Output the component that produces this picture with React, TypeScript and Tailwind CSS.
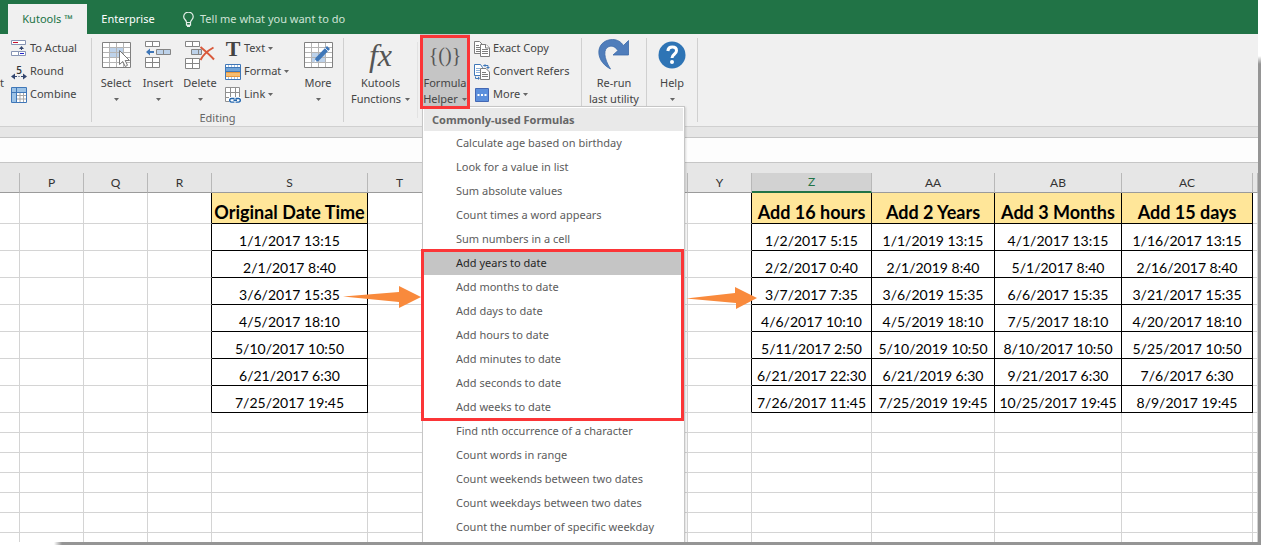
import { useState } from 'react';
import type { ReactNode } from 'react';

const formulas = [
  'Calculate age based on birthday',
  'Look for a value in list',
  'Sum absolute values',
  'Count times a word appears',
  'Sum numbers in a cell',
  'Add years to date',
  'Add months to date',
  'Add days to date',
  'Add hours to date',
  'Add minutes to date',
  'Add seconds to date',
  'Add weeks to date',
  'Find nth occurrence of a character',
  'Count words in range',
  'Count weekends between two dates',
  'Count weekdays between two dates',
  'Count the number of specific weekday',
];

// Columns between T and Y lie behind the open menu and stay unlabelled.
const columns = [
  { name: '', width: 'w-[20px]' },
  { name: 'P', width: 'w-[64px]' },
  { name: 'Q', width: 'w-[64px]' },
  { name: 'R', width: 'w-[64px]' },
  { name: 'S', width: 'w-[156px]' },
  { name: 'T', width: 'w-[64px]' },
  { name: '', width: 'w-[64px]' },
  { name: '', width: 'w-[64px]' },
  { name: '', width: 'w-[64px]' },
  { name: '', width: 'w-[64px]' },
  { name: 'Y', width: 'w-[64px]' },
  { name: 'Z', width: 'w-[120px]' },
  { name: 'AA', width: 'w-[123px]' },
  { name: 'AB', width: 'w-[127px]' },
  { name: 'AC', width: 'w-[131px]' },
  { name: '', width: '' },
];

const titles: Record<string, string> = {
  S: 'Original Date Time',
  Z: 'Add 16 hours',
  AA: 'Add 2 Years',
  AB: 'Add 3 Months',
  AC: 'Add 15 days',
};

const rows: Record<string, string>[] = [
  { S: '1/1/2017 13:15', Z: '1/2/2017 5:15', AA: '1/1/2019 13:15', AB: '4/1/2017 13:15', AC: '1/16/2017 13:15' },
  { S: '2/1/2017 8:40', Z: '2/2/2017 0:40', AA: '2/1/2019 8:40', AB: '5/1/2017 8:40', AC: '2/16/2017 8:40' },
  { S: '3/6/2017 15:35', Z: '3/7/2017 7:35', AA: '3/6/2019 15:35', AB: '6/6/2017 15:35', AC: '3/21/2017 15:35' },
  { S: '4/5/2017 18:10', Z: '4/6/2017 10:10', AA: '4/5/2019 18:10', AB: '7/5/2017 18:10', AC: '4/20/2017 18:10' },
  { S: '5/10/2017 10:50', Z: '5/11/2017 2:50', AA: '5/10/2019 10:50', AB: '8/10/2017 10:50', AC: '5/25/2017 10:50' },
  { S: '6/21/2017 6:30', Z: '6/21/2017 22:30', AA: '6/21/2019 6:30', AB: '9/21/2017 6:30', AC: '7/6/2017 6:30' },
  { S: '7/25/2017 19:45', Z: '7/26/2017 11:45', AA: '7/25/2019 19:45', AB: '10/25/2017 19:45', AC: '8/9/2017 19:45' },
];

const emptyRows = [0, 1, 2, 3, 4, 5, 6];

function Caret() {
  return (
    <svg width="5" height="3" viewBox="0 0 5 3" className="shrink-0" aria-hidden="true">
      <path d="M0 0h5L2.5 3z" fill="#666" />
    </svg>
  );
}

function Separator() {
  return <div className="my-1 w-px shrink-0 bg-[#d0d0d0]" />;
}

interface BigButtonProps {
  icon: ReactNode;
  label: string;
  second?: string;
  caret?: boolean;
  className: string;
}

function BigButton({ icon, label, second, caret = true, className }: BigButtonProps) {
  return (
    <button className={`flex h-[75px] shrink-0 flex-col items-center whitespace-nowrap leading-4 ${className}`}>
      <span className="flex h-[41px] items-center justify-center">{icon}</span>
      <span>{label}</span>
      <span className="flex h-4 items-center gap-1">
        {second}
        {caret && <Caret />}
      </span>
    </button>
  );
}

function SmallButton({ icon, label, caret }: { icon: ReactNode; label: string; caret?: boolean }) {
  return (
    <button className="flex h-[23px] items-center gap-[3px] whitespace-nowrap">
      <span className="flex w-4 shrink-0 justify-center">{icon}</span>
      <span>{label}</span>
      {caret && <Caret />}
    </button>
  );
}

const ToActualIcon = () => (
  <svg width="16" height="17" viewBox="0 0 16 17" fill="#fff">
    <path d="M.5.5h14v4H.5zM.5 11.5h7v4h-7zM7.5 11.5h7v4h-7z" stroke="#8794b4" />
    <path d="M2 2.5h5" stroke="#c8102e" />
    <path d="M9 13.5h4" stroke="#2222cc" />
    <path d="M10.500 6l2.500 3h-5z" fill="#33466f" />
    <path d="M10.500 8v2" stroke="#33466f" />
  </svg>
);

const RoundIcon = () => (
  <svg width="16" height="18" viewBox="0 0 16 18">
    <text x="8" y="11" textAnchor="middle" fontSize="10" fontWeight="600" fill="#333" fontFamily="Open Sans, sans-serif">5</text>
    <path d="M0 13.500L4 10.500v6zM16 13.500l-4-3v6z" fill="#33466f" />
    <path d="M3 13.500h3M10 13.500h3M7.500 13.500h1" stroke="#33466f" />
  </svg>
);

const CombineIcon = () => (
  <svg width="16" height="16" viewBox="0 0 16 16">
    <path d="M.5.5h15v15H.5z" fill="#fff" />
    <path d="M1 1h14v4H1zM1 5h4v10H1z" fill="#9dc3e6" />
    <path d="M5.500 5v10M9 5v10M12.500 5v10M5 8.500h10M5 12h10" stroke="#a8a8a8" />
    <path d="M.5.5h15v15H.5zM.5 5.500h15M5.500.5v15" fill="none" stroke="#3f77b8" />
  </svg>
);

const GridBase = () => (
  <>
    <path d="M.5.5h28v25H.5z" fill="#fff" />
    <path d="M7.500 6h14v10h-14z" fill="#bdd2ea" />
    <path d="M7.500 1v24M14.500 1v24M21.500 1v24M1 5.500h27M1 10.500h27M1 15.500h27M1 20.500h27" stroke="#b4b4b4" />
    <path d="M.5.5h28v25H.5z" fill="none" stroke="#808080" />
  </>
);

const SelectIcon = () => (
  <svg width="29" height="26" viewBox="0 0 29 26">
    <GridBase />
    <path d="M17.500 8.500v14l3.300-3 2.400 5 2.300-1.200-2.300-4.800h4.300z" fill="#fff" stroke="#777" />
  </svg>
);

const MoreIcon = () => (
  <svg width="29" height="26" viewBox="0 0 29 26">
    <path d="M.5.5h28v25H.5z" fill="#fff" />
    <path d="M7.500 11h14v9h-14z" fill="#bdd2ea" />
    <path d="M7.500 1v24M14.500 1v24M21.500 1v24M1 5.500h27M1 10.500h27M1 15.500h27M1 20.500h27" stroke="#b4b4b4" />
    <path d="M.5.5h28v25H.5z" fill="none" stroke="#808080" />
    <path d="M10 20.500l1.500-4.500L23 4l3 3L14.500 19z" fill="#3f77b8" />
    <path d="M21 6l3 3" stroke="#fff" strokeWidth=".8" />
    <path d="M10 20.500l1-3 2 2z" fill="#fff" />
  </svg>
);

const InsertIcon = () => (
  <svg width="27" height="28" viewBox="0 0 27 28" fill="#fff" stroke="#858585">
    <path d="M.5.5h14v5H.5zM7.500.5v5M.5 16.500h14v10H.5zM7.500 16.500v10M.5 21.500h14" />
    <path d="M11.500 8.500h14v5h-14zM18.500 8.500v5" fill="#bdd2ea" />
    <path d="M1 11l4-3.500v2.500h4v2H5v2.500z" fill="#3f77b8" stroke="none" />
  </svg>
);

const DeleteIcon = () => (
  <svg width="30" height="28" viewBox="0 0 30 28" fill="#fff" stroke="#858585">
    <path d="M.5.500h14v5H.5zM7.500.5v5M.5 17.500h14v10H.5zM7.500 17.500v10M.5 22.500h14" />
    <path d="M6.500 8.500h10v5h-10zM13.500 8.500v5" fill="#bdd2ea" />
    <path d="M15.500 6c3 2.500 9 7.500 13.500 12.500M28.500 6.500C24 9 18 14 15.500 19" fill="none" stroke="#d9593b" strokeWidth="2" />
  </svg>
);

const FormatIcon = () => (
  <svg width="16" height="16" viewBox="0 0 16 16">
    <path d="M.5.5h15v15H.5z" fill="#fff" />
    <path d="M3.500 1v14M6.500 1v14M9.500 1v14M12.500 1v14" stroke="#a8c4e2" />
    <path d="M1 4h14v3H1z" fill="#6fa3d8" />
    <path d="M1 9h14v3H1z" fill="#f6bd72" />
    <path d="M0 3.500h16M0 7.500h16" stroke="#3f77b8" />
    <path d="M1 8.500h14M1 12.500h14" stroke="#e8973c" />
    <path d="M.5.5h15v15H.5z" fill="none" stroke="#3f77b8" />
  </svg>
);

const LinkIcon = () => (
  <svg width="16" height="16" viewBox="0 0 16 16" fill="none">
    <path d="M.5.5h14v14H.5z" fill="#fff" />
    <path d="M5.500.5v14M10.500.5v14M.5 5.500h14M.5 10.500h14M.5.5h14v14H.5z" stroke="#909090" />
    <path d="M4 10h12v6H4z" fill="#fff" />
    <path d="M9.500 11.500h-3a1.800 1.800 0 000 3.600h3M10.500 15.100h3a1.800 1.800 0 000-3.600h-3M8.500 13.300h3.500" stroke="#2366ad" strokeWidth="1.400" />
  </svg>
);

const CopyIcon = () => (
  <svg width="16" height="16" viewBox="0 0 16 16" fill="#fff" stroke="#7d7d7d">
    <path d="M.5.5h5l3 3v9h-8z" />
    <path d="M2 4.500h3M2 6.500h5M2 8.500h5M2 10.500h4" />
    <path d="M6.500 3.500h5.500l3.500 3.500v8.500h-9z" />
    <path d="M11.500 3.500v3.500h4M8 8.500h6M8 10.500h6M8 12.500h6" />
  </svg>
);

const ConvertIcon = () => (
  <svg width="16" height="16" viewBox="0 0 16 16" fill="#fff">
    <path d="M.5 11.500v-11h6l2 3v8z" stroke="#3f77b8" />
    <path d="M2 4.500h4M2 6.500h4M2 8.500h4" stroke="#8cb0d8" />
    <path d="M6.500 4.500h5.500l3.500 3.500v7.500h-9z" stroke="#7d7d7d" />
    <path d="M8 8.500h4M8 10.500h6M8 12.500h6" stroke="#7d7d7d" />
    <path d="M9.500 1.500h4.500v2M1.500 12.500v2H5" fill="none" stroke="#3f77b8" />
    <path d="M11.500 0v3L9 1.500zM12 3h4l-2 2zM4 12.500v3.500l2-1.700z" fill="#3f77b8" />
  </svg>
);

const DotsIcon = () => (
  <svg width="14" height="14" viewBox="0 0 14 14">
    <path d="M.5.5h13v13H.5z" fill="#5b8fdc" stroke="#4468b4" />
    <path d="M2.500 6h2v2h-2zM6 6h2v2H6zM9.500 6h2v2h-2z" fill="#fff" />
  </svg>
);

const RerunIcon = () => (
  <svg width="32" height="31" viewBox="0 0 32 31">
    <path
      d="M12.500 30C3 25 0 17 1 11 2 4.500 8 .5 14.500.5c5 0 8.500 2.500 11 6l5-5V16H15l5-4.500C17 7.500 14 6.500 11 7.500 5 9.500 5.500 19 12.500 30z"
      fill="#4f7dbb"
      stroke="#3c69a8"
      strokeWidth=".8"
    />
  </svg>
);

const HelpIcon = () => (
  <svg width="28" height="28" viewBox="0 0 28 28">
    <circle cx="14" cy="14" r="13.500" fill="#2e74b5" />
    <path d="M9.800 10c.3-2.500 2-3.900 4.400-3.900 2.600 0 4.300 1.500 4.300 3.600 0 3.600-4.500 3.500-4.500 7.300" fill="none" stroke="#fff" strokeWidth="3" />
    <circle cx="14" cy="21" r="2" fill="#fff" />
  </svg>
);

const BulbIcon = () => (
  <svg width="11" height="15" viewBox="0 0 11 15" fill="none" stroke="#e6f0ea" strokeWidth="1.200">
    <path d="M3.500 10.500c0-2.500-2.800-3-2.800-5.700a4.700 4.700 0 019.500 0c0 2.700-2.700 3.200-2.700 5.700zM3.500 10.500v2.700h4v-2.700M4 14.300h3" />
  </svg>
);

function FormulaMenu() {
  const [active, setActive] = useState(5);

  return (
    <div className="absolute top-[72px] left-[2px] w-[263px] border border-[#c6c6c6] bg-white p-px pb-3 text-[#5c5c5c] shadow-[1px_1px_2px_rgba(0,0,0,0.15)]">
      <h2 className="h-[23px] bg-[#e9e9e9] pl-2 font-bold leading-[23px] text-[#666]">Commonly-used Formulas</h2>
      <ul role="menu">
        {formulas.map((name, index) => (
          <li key={name} role="none">
            <button
              role="menuitem"
              onMouseEnter={() => setActive(index)}
              className={`block h-6 w-full pl-8 text-left whitespace-nowrap leading-6 ${index === active ? 'bg-[#c5c5c5] text-[#262626]' : ''}`}
            >
              {name}
            </button>
          </li>
        ))}
      </ul>
      {/* callout around the date helpers */}
      <div className="pointer-events-none absolute -left-[2px] top-[142px] h-[172px] w-[263px] border-3 border-[#fb3537]" />
    </div>
  );
}

function Ribbon() {
  return (
    <div className="relative z-10 flex h-[93px] shrink-0 border-b border-[#d0d0d0] bg-[#f0f0f0] text-[#444]">
      <div className="flex w-[91px] shrink-0">
        <span className="w-[11px] shrink-0 pt-[41px] leading-4">t</span>
        <div className="flex flex-col items-start pt-[3px]">
          <SmallButton icon={<ToActualIcon />} label="To Actual" />
          <SmallButton icon={<RoundIcon />} label="Round" />
          <SmallButton icon={<CombineIcon />} label="Combine" />
        </div>
      </div>
      <Separator />
      <div className="flex w-[251px] shrink-0 flex-col">
        <div className="flex pl-[3px]">
          <BigButton className="w-[42px]" icon={<SelectIcon />} label="Select" />
          <BigButton className="w-[42px]" icon={<InsertIcon />} label="Insert" />
          <BigButton className="w-[42px]" icon={<DeleteIcon />} label="Delete" />
          <div className="flex w-[76px] flex-col items-start pt-[3px] pl-1">
            <SmallButton icon={<span className="font-['Liberation_Serif',serif] text-[22px] leading-5 font-bold">T</span>} label="Text" caret />
            <SmallButton icon={<FormatIcon />} label="Format" caret />
            <SmallButton icon={<LinkIcon />} label="Link" caret />
          </div>
          <BigButton className="w-[42px]" icon={<MoreIcon />} label="More" />
        </div>
        <span className="text-center leading-[18px] text-[#666]">Editing</span>
      </div>
      <Separator />
      <BigButton
        className="w-[73px]"
        icon={<span className="font-['Liberation_Serif',serif] text-[32px] leading-8 text-[#555] italic">fx</span>}
        label="Kutools"
        second="Functions"
      />
      <div className="my-2 mr-[2px] w-px shrink-0 bg-[#e2e2e2]" />
      <div className="relative w-[50px] shrink-0">
        <BigButton
          className="w-[50px] bg-[#c5c5c5]"
          icon={<span className="font-['Liberation_Serif',serif] text-[20px] leading-6 text-[#555]">{'{()}'}</span>}
          label="Formula"
          second="Helper"
        />
        <FormulaMenu />
        <div className="pointer-events-none absolute top-px left-0 h-[74px] w-[50px] border-3 border-[#fb3537]" />
      </div>
      <div className="flex w-[111px] shrink-0 flex-col items-start pt-[3px] pl-1">
        <SmallButton icon={<CopyIcon />} label="Exact Copy" />
        <SmallButton icon={<ConvertIcon />} label="Convert Refers" />
        <SmallButton icon={<DotsIcon />} label="More" caret />
      </div>
      <Separator />
      <BigButton className="w-[64px]" icon={<RerunIcon />} label="Re-run" second="last utility" caret={false} />
      <Separator />
      <BigButton className="w-[50px]" icon={<HelpIcon />} label="Help" />
      <Separator />
    </div>
  );
}

function Sheet() {
  // The boxed columns carry black borders; R and Y close them on the left.
  const rightBorder = (name: string) => (titles[name] || name === 'R' || name === 'Y' ? 'border-r-black' : 'border-r-[#d4d4d4]');
  const bottomBorder = (name: string) => (titles[name] ? 'border-b-black' : 'border-b-[#d4d4d4]');

  return (
    <div className="relative min-h-0 flex-1 overflow-hidden bg-white">
      <div className="h-[10px] bg-[#e6e6e6]" />
      <table className="w-full table-fixed border-separate border-spacing-0 font-[Lato,sans-serif] text-[14px] text-black">
        <colgroup>
          {columns.map((column, index) => (
            <col key={index} className={column.width} />
          ))}
        </colgroup>
        <thead>
          <tr className="h-5 bg-[#e6e6e6] text-[12px] text-[#333]">
            {columns.map((column, index) => (
              <th
                key={index}
                scope="col"
                className={`border-r border-r-[#b8b8b8] p-0 leading-[18px] font-normal ${
                  column.name === 'Z' ? 'border-b-2 border-b-[#217346] bg-[#d2d2d2] text-[#217346]' : 'border-b border-b-[#9b9b9b]'
                }`}
              >
                {column.name}
              </th>
            ))}
          </tr>
        </thead>
        <tbody>
          <tr className="h-[31px] text-[18px]">
            {columns.map(({ name }, index) => (
              <td
                key={index}
                className={`border-r border-b p-0 text-center align-bottom leading-[22px] font-bold whitespace-nowrap ${rightBorder(name)} ${bottomBorder(name)} ${titles[name] ? 'bg-[#ffe699]' : ''}`}
              >
                {titles[name]}
              </td>
            ))}
          </tr>
          {rows.map((row) => (
            <tr key={row.S} className="h-[27px]">
              {columns.map(({ name }, index) => (
                <td
                  key={index}
                  className={`border-r border-b p-0 text-center align-bottom leading-[18px] whitespace-nowrap ${rightBorder(name)} ${bottomBorder(name)}`}
                >
                  {row[name]}
                </td>
              ))}
            </tr>
          ))}
          {emptyRows.map((row) => (
            <tr key={row} className="h-5">
              {columns.map((_, index) => (
                <td key={index} className="border-r border-b border-[#d4d4d4] p-0" />
              ))}
            </tr>
          ))}
        </tbody>
      </table>
      <svg className="absolute top-[123px] left-[343px]" width="79" height="23" viewBox="0 0 79 23" fill="#f98a3c" aria-hidden="true">
        <path d="M0 10.500L56 6V0l22 11-22 11v-6z" />
      </svg>
      <svg className="absolute top-[124px] left-[686px]" width="72" height="23" viewBox="0 0 72 23" fill="#f98a3c" aria-hidden="true">
        <path d="M0 11.500L49 6V0l22 11-21 11v-6z" />
      </svg>
    </div>
  );
}

export default function App() {
  return (
    <div className="relative h-screen overflow-hidden bg-white pr-[3px] pb-[3px] font-['Noto_Sans',sans-serif] text-[11px]">
      <div className="flex h-full flex-col overflow-hidden">
        <nav className="flex h-[34px] shrink-0 items-end bg-[#217346] pl-2 text-white" aria-label="Ribbon tabs">
          <button className="h-[30px] w-[79px] bg-[#f0f0f0] text-[#217346]">Kutools ™</button>
          <button className="h-[30px] w-[82px]">Enterprise</button>
          <button className="flex h-[30px] items-center gap-[6px] pl-[14px] text-[#cfe3d7]">
            <BulbIcon />
            Tell me what you want to do
          </button>
        </nav>
        <Ribbon />
        <div className="h-[10px] shrink-0 bg-[#e6e6e6]" />
        <input
          aria-label="Formula bar"
          className="h-[26px] w-full shrink-0 border-y border-[#c6c6c6] bg-[#fdfdfd] px-2 outline-none"
        />
        <Sheet />
      </div>
      {/* drop shadow of the window */}
      <div className="absolute top-[56px] right-0 bottom-0 w-[3px] bg-linear-to-b from-white to-[#959595] to-[8px]" />
      <div className="absolute right-0 bottom-0 left-[54px] h-[3px] bg-linear-to-r from-white to-[#959595] to-[8px]" />
    </div>
  );
}
